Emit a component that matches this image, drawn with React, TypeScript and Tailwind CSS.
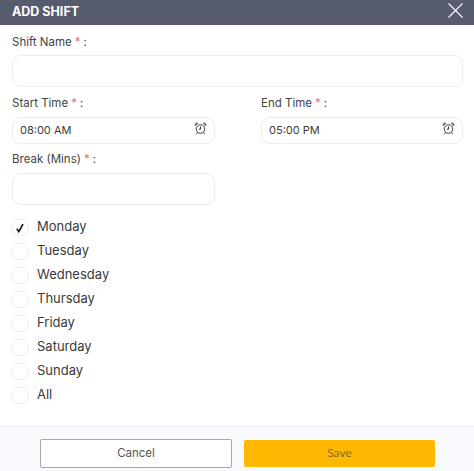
const days = ['Monday', 'Tuesday', 'Wednesday', 'Thursday', 'Friday', 'Saturday', 'Sunday', 'All'];

const AlarmIcon = () => (
  <svg width="13" height="13" viewBox="0 0 13 13" fill="none" stroke="#3a3a3a" strokeWidth="1" className="shrink-0">
    <circle cx="6.5" cy="7" r="4.3" />
    <path d="M6.5 4.4V7.2H4.6" />
    <path d="M1 3.2C1 1.8 2.2 0.8 3.6 1.1L1.3 3.6Z" />
    <path d="M12 3.2C12 1.8 10.8 0.8 9.4 1.1L11.7 3.6Z" />
    <path d="M3.4 10.5L2.4 12.2M9.6 10.5L10.6 12.2" />
  </svg>
);

const Label = ({ text }: { text: string }) => (
  <p className="h-[14px] text-[11.5px] leading-[13px] text-[#444444]">
    {text}
    <span className="ml-[3px] text-[#e2787c]">*</span>
    <span className="ml-[3px]">:</span>
  </p>
);

const TimeInput = ({ value }: { value: string }) => (
  <div className="mt-[6px] flex h-[27px] items-center justify-between rounded-[9px] border border-[#ececf0] pl-[7px] pr-[7px]">
    <span className="text-[11px] text-[#3d3d3d]">{value}</span>
    <span className="-mt-[4px]">
      <AlarmIcon />
    </span>
  </div>
);

export default function App() {
  return (
    <div className="flex h-[471px] w-[474px] flex-col overflow-hidden bg-white font-['Inter',sans-serif]">
      {/* Header */}
      <div className="flex h-[25px] shrink-0 items-center justify-between bg-[#565b6e] pl-[12px] pr-[11px]">
        <h1 className="text-[12.5px] font-bold text-white">ADD SHIFT</h1>
        <svg width="15" height="15" viewBox="0 0 15 15" fill="none" stroke="#ffffff" strokeWidth="1.1" className="-mt-[5px]">
          <path d="M0.5 0.5L14.5 14.5M14.5 0.5L0.5 14.5" />
        </svg>
      </div>

      {/* Form */}
      <div className="flex flex-1 flex-col pl-[12px] pr-[11px] pt-[11px]">
        <Label text="Shift Name" />
        <div className="mt-[5px] h-[32px] rounded-[9px] border border-[#ececf0]" />

        <div className="mt-[10px] flex gap-[46px]">
          <div className="w-[203px]">
            <Label text="Start Time" />
            <TimeInput value="08:00 AM" />
          </div>
          <div className="w-[202px]">
            <Label text="End Time" />
            <TimeInput value="05:00 PM" />
          </div>
        </div>

        <div className="mt-[9px]">
          <Label text="Break (Mins)" />
          <div className="mt-[6px] h-[32px] w-[203px] rounded-[9px] border border-[#ececf0]" />
        </div>

        <div className="mt-[14px] flex flex-col gap-[7px]">
          {days.map((day, i) => (
            <div key={day} className="flex h-[17px] items-center gap-[9px]">
              <div className="flex h-[17px] w-[16px] items-center justify-center rounded-[3px] border border-[#f0f0f3]">
                {i === 0 && (
                  <svg width="10" height="10" viewBox="0 0 10 10" fill="none" stroke="#111111" strokeWidth="1.6">
                    <path d="M1.8 5.6L3.8 8.6L8 1.2" />
                  </svg>
                )}
              </div>
              <span className="-mt-[2px] text-[13px] text-[#3a3a3a]">{day}</span>
            </div>
          ))}
        </div>
      </div>

      {/* Footer */}
      <div className="flex h-[45px] shrink-0 items-center gap-[12px] border-t border-[#eeeff3] bg-[#f8f9fc] pl-[40px] pr-[39px] pt-[8px]">
        <button className="h-[29px] w-[192px] rounded-[2px] border border-[#a8a8a8] bg-white pt-[1px] text-[11.5px] text-[#555555]">
          Cancel
        </button>
        <button className="h-[27px] w-[191px] rounded-[2px] bg-[#ffb800] font-['Lato',sans-serif] text-[12px] text-[#8a6d1a]">
          Save
        </button>
      </div>
    </div>
  );
}
